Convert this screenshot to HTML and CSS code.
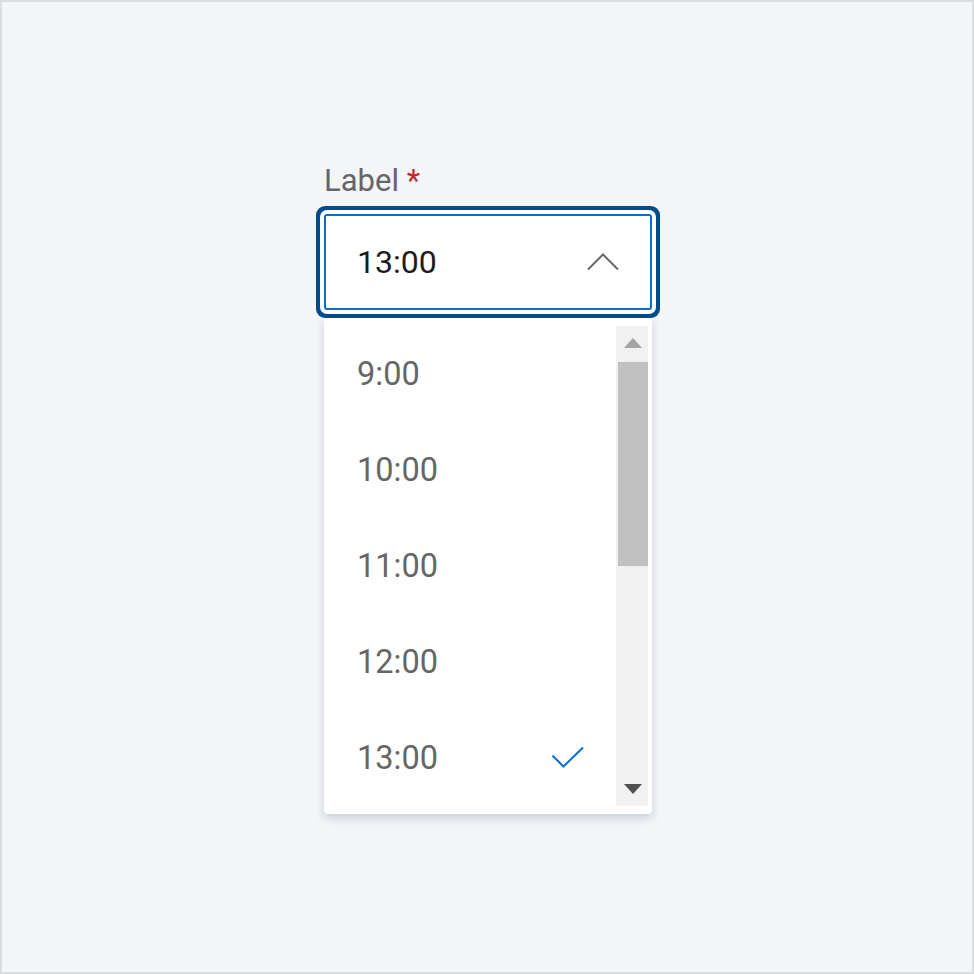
FILE: index.html
```html
<!DOCTYPE html>
<html lang="en">
<head>
    <meta charset="UTF-8">
    <meta name="viewport" content="width=device-width, initial-scale=1.0">
    <title>Time select</title>
    <link rel="stylesheet" href="styles.css">
</head>
<body>
    <div class="frame">
        <div class="field">
            <label class="label">Label <span class="required">*</span></label>

            <div class="select">
                <span class="value">13:00</span>
                <svg class="chevron" width="32" height="18" viewBox="0 0 32 18">
                    <polyline points="1,16.5 16,1.5 31,16.5" fill="none" stroke="#666" stroke-width="2"/>
                </svg>
            </div>

            <div class="list">
                <ul class="options">
                    <li class="option">9:00</li>
                    <li class="option">10:00</li>
                    <li class="option">11:00</li>
                    <li class="option">12:00</li>
                    <li class="option selected">
                        <span>13:00</span>
                        <svg class="check" width="33" height="24" viewBox="0 0 33 24">
                            <polyline points="1.5,9.5 12.5,20.5 32,1.5" fill="none" stroke="#0b6fc7" stroke-width="2"/>
                        </svg>
                    </li>
                </ul>
                <div class="scrollbar">
                    <div class="scroll-btn"><span class="arrow-up"></span></div>
                    <div class="scroll-track">
                        <div class="thumb"></div>
                    </div>
                    <div class="scroll-btn"><span class="arrow-down"></span></div>
                </div>
            </div>
        </div>
    </div>
</body>
</html>
```

FILE: styles.css
```css
body {
    margin: 0;
    font-family: Roboto, "Liberation Sans", sans-serif;
}
.frame {
    box-sizing: border-box;
    height: 974px;
    padding: 161px 0 0 2px;
    background: #f4f5f7;
    border: 2px solid #dcdde0;
    display: flex;
    justify-content: center;
}
.field {
    width: 328px;
    display: flex;
    flex-direction: column;
}
.label {
    font-size: 31px;
    line-height: 36px;
    color: #666;
    margin-bottom: 15px;
}
.required {
    color: #c4262e;
}
.select {
    box-sizing: border-box;
    height: 96px;
    padding: 0 31px 0 31px;
    background: white;
    border: 2px solid #0b6fc7;
    border-radius: 3px;
    box-shadow: 0 0 0 4px #fff, 0 0 0 8px #004b8d;
    display: flex;
    align-items: center;
    justify-content: space-between;
}
.value {
    font-size: 32px;
    color: #1c1c1c;
    margin-top: -1px;
}
.list {
    margin-top: 8px;
    height: 496px;
    box-sizing: border-box;
    padding: 8px 4px 8px 0;
    background: white;
    border-radius: 0 0 4px 4px;
    box-shadow: 0 4px 10px rgba(30, 50, 90, 0.2);
    display: flex;
}
.options {
    list-style: none;
    margin: 0;
    padding: 0;
    flex: 1;
}
.option {
    height: 96px;
    padding: 0 32px 0 33px;
    font-size: 32.5px;
    color: #666;
    display: flex;
    align-items: center;
    justify-content: space-between;
}
.check {
    margin-top: -1px;
}
.scrollbar {
    width: 32px;
    background: #f1f1f1;
    display: flex;
    flex-direction: column;
}
.scroll-btn {
    height: 34px;
    display: flex;
    align-items: center;
    justify-content: center;
}
.arrow-up {
    margin-left: 2px;
    border-left: 9px solid transparent;
    border-right: 9px solid transparent;
    border-bottom: 10px solid #a3a3a3;
}
.arrow-down {
    margin-left: 2px;
    border-left: 9px solid transparent;
    border-right: 9px solid transparent;
    border-top: 10px solid #505050;
}
.scroll-track {
    flex: 1;
    padding: 2px 0 0 2px;
}
.thumb {
    height: 204px;
    background: #c1c1c1;
}
```
